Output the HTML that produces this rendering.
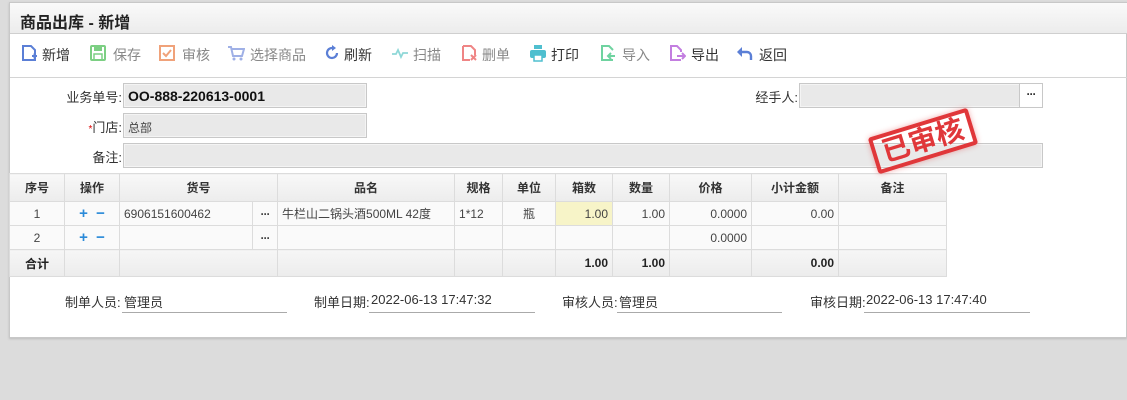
<!DOCTYPE html>
<html><head><meta charset="utf-8"><style>
*{margin:0;padding:0;box-sizing:border-box}
body{width:1127px;height:400px;overflow:hidden;background:#dcdcdc;font-family:"Liberation Sans","Noto Sans CJK SC",sans-serif;font-size:12px;color:#333;position:relative}
.a{position:absolute}
.panel{left:9px;top:2px;width:1118px;height:336px;background:#fff;border:1px solid #c8c8c8;box-shadow:0 1px 2px #bbb}
.title{left:10px;top:3px;width:1117px;height:31px;background:linear-gradient(#fafafa,#ececec);border-bottom:1px solid #cfcfcf;font-size:16px;font-weight:bold;color:#222;padding:6px 0 0 10px}
.tb{top:45px;font-size:14px;color:#333}
.tb.g{color:#888}
.tbline{left:10px;top:77px;width:1117px;height:1px;background:#d4d4d4}
.lab{font-size:13px;color:#333;text-align:right}
.inp{background:#e9e9e9;border:1px solid #c8c8c8;box-shadow:inset 0 0 0 1px #f4f4f4}
table{position:absolute;left:9px;top:173px;border-collapse:collapse;width:937px;table-layout:fixed}
td,th{border:1px solid #dcdcdc;height:24px;font-size:12px;padding:0 4px;white-space:nowrap}
th{height:28px;background:linear-gradient(#f8f8f8,#ececec);font-weight:bold;color:#333}
tr.row td{background:#fafafa;color:#444}
tr.s td{background:linear-gradient(#f6f6f6,#ececec);height:27px;font-weight:bold;color:#222}
.c{text-align:center}.r{text-align:right}
.pm{color:#2a8ad9;font-weight:bold;font-size:15px}
.dots{font-weight:bold;color:#333;letter-spacing:-1px}
.fl{top:292px;font-size:13px;color:#333}
.ul{height:1px;background:#aaa;top:312px}
</style></head><body>
<div class="a panel"></div>
<div class="a title">商品出库 - 新增</div>

<svg class="a" style="left:20px;top:44px" width="18" height="18" viewBox="0 0 18 18"><path d="M3 2h8l4 4v10H3z" fill="none" stroke="#5b7fd6" stroke-width="2"/><path d="M12 12h5M14.5 9.5v5" stroke="#5b7fd6" stroke-width="2"/></svg>
<div class="a tb" style="left:42px">新增</div>
<svg class="a" style="left:89px;top:44px" width="18" height="18" viewBox="0 0 18 18"><rect x="2" y="2" width="14" height="14" rx="1" fill="none" stroke="#7ccf83" stroke-width="2"/><rect x="5" y="2" width="8" height="5" fill="#7ccf83"/><rect x="5" y="10" width="8" height="6" fill="none" stroke="#7ccf83" stroke-width="1.5"/></svg>
<div class="a tb g" style="left:113px">保存</div>
<svg class="a" style="left:158px;top:44px" width="18" height="18" viewBox="0 0 18 18"><rect x="2" y="2" width="14" height="14" fill="none" stroke="#f0a27a" stroke-width="2"/><path d="M5 9l3 3 5-6" fill="none" stroke="#f0a27a" stroke-width="2"/></svg>
<div class="a tb g" style="left:182px">审核</div>
<svg class="a" style="left:227px;top:44px" width="18" height="18" viewBox="0 0 18 18"><path d="M1 3h3l2 9h9l2-7H5" fill="none" stroke="#9fb0e6" stroke-width="2"/><circle cx="7" cy="15" r="1.5" fill="#9fb0e6"/><circle cx="14" cy="15" r="1.5" fill="#9fb0e6"/></svg>
<div class="a tb g" style="left:250px">选择商品</div>
<svg class="a" style="left:323px;top:44px" width="18" height="18" viewBox="0 0 18 18"><path d="M14 9a5 5 0 1 1-3-4.6" fill="none" stroke="#5b7fd6" stroke-width="2.2"/><path d="M9 1l4 3-4 3z" fill="#5b7fd6"/></svg>
<div class="a tb" style="left:344px">刷新</div>
<svg class="a" style="left:391px;top:44px" width="18" height="18" viewBox="0 0 18 18"><path d="M1 10h4l2-4 3 7 2-4h5" fill="none" stroke="#8fd8d8" stroke-width="1.8"/></svg>
<div class="a tb g" style="left:413px">扫描</div>
<svg class="a" style="left:460px;top:44px" width="18" height="18" viewBox="0 0 18 18"><path d="M3 2h8l4 4v5M10 16H3V2" fill="none" stroke="#ef8585" stroke-width="2"/><path d="M11 11l5 5M16 11l-5 5" stroke="#ef8585" stroke-width="2"/></svg>
<div class="a tb g" style="left:482px">删单</div>
<svg class="a" style="left:529px;top:44px" width="18" height="18" viewBox="0 0 18 18"><rect x="5" y="1" width="8" height="4" fill="#4fbfcf"/><rect x="1" y="6" width="16" height="8" rx="2" fill="#4fbfcf"/><rect x="5" y="11" width="8" height="6" fill="#fff" stroke="#4fbfcf" stroke-width="1.5"/></svg>
<div class="a tb" style="left:551px">打印</div>
<svg class="a" style="left:599px;top:44px" width="18" height="18" viewBox="0 0 18 18"><path d="M14 6L10 2H3v14h11" fill="none" stroke="#6fd3a0" stroke-width="2"/><path d="M16 12H9M12 9l-3 3 3 3" fill="none" stroke="#6fd3a0" stroke-width="2"/></svg>
<div class="a tb g" style="left:622px">导入</div>
<svg class="a" style="left:668px;top:44px" width="18" height="18" viewBox="0 0 18 18"><path d="M13 8V6L9 2H3v14h10" fill="none" stroke="#c37ee0" stroke-width="2"/><path d="M9 12h8M14 9l3 3-3 3" fill="none" stroke="#c37ee0" stroke-width="2"/></svg>
<div class="a tb" style="left:691px">导出</div>
<svg class="a" style="left:736px;top:44px" width="18" height="18" viewBox="0 0 18 18"><path d="M5 8h6a4 4 0 0 1 4 4v4" fill="none" stroke="#5b7fd6" stroke-width="2.4"/><path d="M1 8l5-5v10z" fill="#5b7fd6"/></svg>
<div class="a tb" style="left:759px">返回</div>
<div class="a tbline"></div>

<div class="a lab" style="left:40px;top:87px;width:82px">业务单号:</div>
<div class="a inp" style="left:123px;top:83px;width:244px;height:25px;font-size:14px;font-weight:bold;color:#111;padding:4px 4px">OO-888-220613-0001</div>
<div class="a lab" style="left:40px;top:117px;width:82px"><span style="color:#d00;font-size:10px">*</span>门店:</div>
<div class="a inp" style="left:123px;top:113px;width:244px;height:25px;padding:5px 4px;color:#444">总部</div>
<div class="a lab" style="left:40px;top:147px;width:82px">备注:</div>
<div class="a inp" style="left:123px;top:143px;width:920px;height:25px"></div>
<div class="a lab" style="left:720px;top:87px;width:78px">经手人:</div>
<div class="a inp" style="left:799px;top:83px;width:244px;height:25px"></div>
<div class="a dots" style="left:1019px;top:84px;width:23px;height:23px;background:#fff;border-left:1px solid #c8c8c8;text-align:center;line-height:20px">···</div>

<table>
<colgroup><col style="width:55px"><col style="width:55px"><col style="width:133px"><col style="width:25px"><col style="width:177px"><col style="width:48px"><col style="width:53px"><col style="width:57px"><col style="width:57px"><col style="width:82px"><col style="width:87px"><col style="width:108px"></colgroup>
<tr><th>序号</th><th>操作</th><th colspan="2">货号</th><th>品名</th><th>规格</th><th>单位</th><th>箱数</th><th>数量</th><th>价格</th><th>小计金额</th><th>备注</th></tr>
<tr class="row"><td class="c">1</td><td class="c"><span class="pm">+ &nbsp;−</span></td><td>6906151600462</td><td class="c dots">···</td><td>牛栏山二锅头酒500ML 42度</td><td>1*12</td><td class="c">瓶</td><td class="r" style="background:#f7f4c8">1.00</td><td class="r">1.00</td><td class="r">0.0000</td><td class="r">0.00</td><td></td></tr>
<tr class="row"><td class="c">2</td><td class="c"><span class="pm">+ &nbsp;−</span></td><td></td><td class="c dots">···</td><td></td><td></td><td></td><td></td><td></td><td class="r">0.0000</td><td></td><td></td></tr>
<tr class="s"><td class="c">合计</td><td></td><td colspan="2"></td><td></td><td></td><td></td><td class="r">1.00</td><td class="r">1.00</td><td></td><td class="r">0.00</td><td></td></tr>
</table>

<div class="a" style="left:871px;top:122px;width:104px;height:38px;border:4px solid #e0373a;border-radius:3px;transform:rotate(-17deg);color:#e0373a;font-size:28px;font-weight:bold;text-align:center;line-height:30px;box-shadow:0 0 6px rgba(224,55,58,.4);letter-spacing:0px">已审核</div>

<div class="a fl" style="left:65px">制单人员:</div><div class="a fl" style="left:124px">管理员</div><div class="a ul" style="left:122px;width:165px"></div>
<div class="a fl" style="left:314px">制单日期:</div><div class="a fl" style="left:371px">2022-06-13 17:47:32</div><div class="a ul" style="left:369px;width:166px"></div>
<div class="a fl" style="left:562px">审核人员:</div><div class="a fl" style="left:619px">管理员</div><div class="a ul" style="left:617px;width:165px"></div>
<div class="a fl" style="left:810px">审核日期:</div><div class="a fl" style="left:866px">2022-06-13 17:47:40</div><div class="a ul" style="left:864px;width:166px"></div>
</body></html>
